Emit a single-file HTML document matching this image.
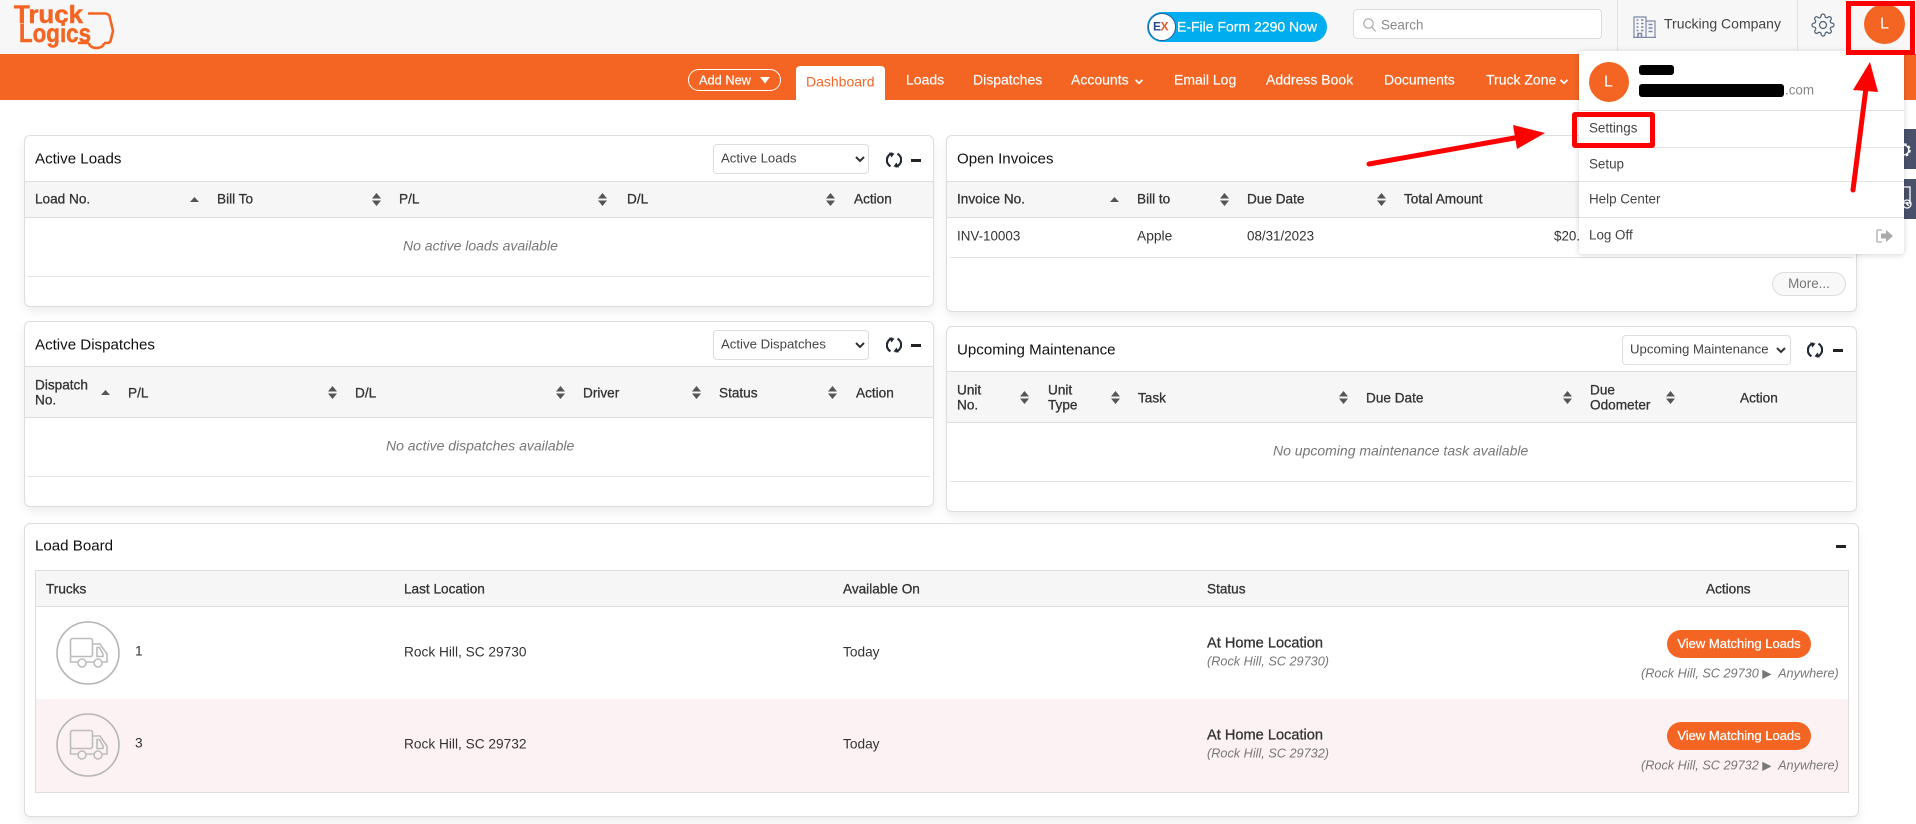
<!DOCTYPE html>
<html lang="en"><head><meta charset="utf-8"><title>Dashboard</title>
<style>
html,body{margin:0;padding:0;background:#fff}
body{position:relative;width:1916px;height:824px;overflow:hidden;font-family:"Liberation Sans",sans-serif;color:#333;font-size:13.4px}
.a{position:absolute;box-sizing:border-box}
.t{position:absolute;white-space:nowrap;transform:translateY(-50%);line-height:15px}
.h{-webkit-text-stroke:.3px #333;color:#333;font-size:13.6px}
.n{color:#fff;font-size:14px;-webkit-text-stroke:.15px #fff}
.ti{font-size:15.1px;color:#111}
.e{font-style:italic;color:#777;font-size:14px}
.b{font-size:13.7px;color:#333}
.s{font-size:13.2px;color:#444}
.m{font-style:italic;color:#777;font-size:12.7px}
.card{position:absolute;box-sizing:border-box;background:#fff;border:1px solid #ddd;border-radius:6px;box-shadow:0 5px 10px rgba(0,0,0,.07)}
.hd{position:absolute;background:#f6f6f6;border-top:1px solid #ddd;border-bottom:1px solid #ddd;box-sizing:border-box}
.ln{position:absolute;height:1px;background:#e2e2e2}
.sel{position:absolute;box-sizing:border-box;height:30px;border:1px solid #ddd;border-radius:4px;background:#fff}
.btn{position:absolute;width:144px;height:28px;left:1667px;border-radius:14px;background:#f46524;color:#fff;font-size:13px;line-height:28px;text-align:center;-webkit-text-stroke:.25px #fff}
svg{position:absolute;overflow:visible}
</style></head>
<body>
<svg width="0" height="0" style="position:absolute">
<symbol id="sb" viewBox="0 0 9 13"><path d="M4.500 0L9 5.500H0zM4.500 13L0 7.500H9z" fill="#555"/></symbol>
<symbol id="su" viewBox="0 0 9 5"><path d="M4.500 0L9 5H0z" fill="#555"/></symbol>
<symbol id="ch" viewBox="0 0 10 7"><path d="M1 1l4 4 4-4" fill="none" stroke="#333" stroke-width="2"/></symbol>
<symbol id="rf" viewBox="0 0 16 16"><path d="M6.500 1.300A7 7 0 0 0 4.500 14.300M9.500 14.700A7 7 0 0 0 11.500 1.700" fill="none" stroke="#1f2733" stroke-width="2.200"/><path d="M3 .5L8.500 1.500 5.500 5.500zM13 15.500L7.500 14.500 10.500 10.500z" fill="#1f2733"/></symbol>
<symbol id="tr" viewBox="0 0 64 64"><circle cx="32" cy="32" r="31" fill="none" stroke="#b5b5b5" stroke-width="1.600"/><g fill="none" stroke="#bcbcbc" stroke-width="1.600"><rect x="14.500" y="17.500" width="22" height="18" rx="2"/><path d="M36.500 23H44L51 33V41H46.500M37.500 41H30.500M21.500 41H14.500V35.500"/><path d="M41 26.500h2.500L47 33v2.500H41z"/><circle cx="26" cy="42" r="4"/><circle cx="42" cy="42" r="4"/></g></symbol>
</svg>

<!-- top bar -->
<div class="a" style="left:0;top:0;width:1916px;height:54px;background:#f7f7f7"></div>
<div class="a" style="left:0;top:54px;width:1916px;height:46px;background:#f46524"></div>

<svg style="left:0;top:0" width="120" height="54" viewBox="0 0 120 54">
<path d="M88 13.500H105Q108 13.500 109.500 16L113 31 110.500 41Q110 43 107 43H104M89 43H78" fill="none" stroke="#f46524" stroke-width="2.600"/>
<path d="M89 43a7.500 5 0 0 0 15 0" fill="none" stroke="#f46524" stroke-width="2.600"/>
<text x="14" y="23" font-family="Liberation Sans" font-size="25" font-weight="bold" fill="#f46524" stroke="#f46524" stroke-width=".5" textLength="69" lengthAdjust="spacingAndGlyphs">Truck</text>
<text x="19" y="42" font-family="Liberation Sans" font-size="26" font-weight="bold" fill="#f46524" stroke="#f46524" stroke-width=".5" textLength="72" lengthAdjust="spacingAndGlyphs">Logics</text>
</svg>

<div class="a" style="left:1147px;top:12px;width:180px;height:30px;border-radius:15px;background:#00aeef"></div>
<div class="a" style="left:1148px;top:13px;width:28px;height:28px;border-radius:50%;background:#fff;border:1px solid #2a5d96"></div>
<span class="t" style="left:1153px;top:27px;font-size:12px;font-weight:bold;color:#2a4c86;letter-spacing:-.5px">E<span style="color:#e8562a">X</span></span>
<span class="t" style="left:1177px;top:27px;color:#fff;font-size:14px;-webkit-text-stroke:.2px #fff">E-File Form 2290 Now</span>

<div class="a" style="left:1353px;top:9px;width:249px;height:30px;border:1px solid #ddd;border-radius:4px;background:#fff"></div>
<svg style="left:1363px;top:18px" width="13" height="14" viewBox="0 0 13 14"><circle cx="5.500" cy="5.500" r="4.700" fill="none" stroke="#aaa" stroke-width="1.200"/><path d="M9 9l3.500 4.500" stroke="#aaa" stroke-width="1.200"/></svg>
<span class="t" style="left:1381px;top:25px;color:#888;font-size:13.400px">Search</span>

<div class="a" style="left:1617px;top:0;width:1px;height:54px;background:#e0e0e0"></div>
<div class="a" style="left:1797px;top:0;width:1px;height:54px;background:#e0e0e0"></div>
<svg style="left:1633px;top:14px" width="23" height="24" viewBox="0 0 23 24" fill="none" stroke="#7a88a8" stroke-width="1.200"><path d="M1 23V3H13V23M13 7H22V23M0 23.400H23"/><path d="M3.500 6h2M8 6h2.500M3.500 9.500h2M8 9.500h2.500M3.500 13h2M8 13h2.500M3.500 16.500h2M8 16.500h2.500M15.500 10.500h4M15.500 14h4M15.500 17.500h4M5 23v-3.500h3.500V23" stroke-width="1.600"/></svg>
<span class="t" style="left:1664px;top:24px;font-size:14px;color:#444">Trucking Company</span>
<svg style="left:1811px;top:13px" width="24" height="24" viewBox="0 0 24 24" fill="none" stroke="#4d5d75" stroke-width="1.200"><circle cx="12" cy="12" r="3.500"/><path d="M19.400 15a1.650 1.650 0 0 0 .33 1.820l.06.06a2 2 0 0 1 0 2.830 2 2 0 0 1-2.830 0l-.06-.06a1.650 1.650 0 0 0-1.820-.33 1.650 1.650 0 0 0-1 1.510V21a2 2 0 0 1-2 2 2 2 0 0 1-2-2v-.09A1.650 1.650 0 0 0 9 19.400a1.650 1.650 0 0 0-1.820.33l-.06.06a2 2 0 0 1-2.830 0 2 2 0 0 1 0-2.830l.06-.06a1.650 1.650 0 0 0 .33-1.820 1.650 1.650 0 0 0-1.510-1H3a2 2 0 0 1-2-2 2 2 0 0 1 2-2h.09A1.650 1.650 0 0 0 4.600 9a1.650 1.650 0 0 0-.33-1.820l-.06-.06a2 2 0 0 1 0-2.830 2 2 0 0 1 2.830 0l.06.06a1.650 1.650 0 0 0 1.820.33H9a1.650 1.650 0 0 0 1-1.510V3a2 2 0 0 1 2-2 2 2 0 0 1 2 2v.09a1.650 1.650 0 0 0 1 1.510 1.650 1.650 0 0 0 1.820-.33l.06-.06a2 2 0 0 1 2.830 0 2 2 0 0 1 0 2.830l-.06.06a1.650 1.650 0 0 0-.33 1.820V9a1.650 1.650 0 0 0 1.510 1H21a2 2 0 0 1 2 2 2 2 0 0 1-2 2h-.09a1.650 1.650 0 0 0-1.510 1z"/></svg>
<div class="a" style="left:1864px;top:4px;width:41px;height:40px;border-radius:50%;background:#f46524"></div>
<span class="t" style="left:1880px;top:24px;color:#fff;font-size:16px">L</span>

<!-- nav -->
<div class="a" style="left:688px;top:69px;width:93px;height:22px;border:1px solid #fff;border-radius:11px"></div>
<span class="t" style="left:699px;top:80px;color:#fff;font-size:12.800px;-webkit-text-stroke:.2px #fff">Add New</span>
<svg style="left:760px;top:77px" width="10" height="7"><path d="M0 0H10L5 6.500z" fill="#fff"/></svg>
<div class="a" style="left:796px;top:66px;width:89px;height:34px;background:#fff;border-radius:4px 4px 0 0"></div>
<span class="t" style="left:806px;top:82px;color:#f46524;font-size:14px">Dashboard</span>
<span class="t n" style="left:906px;top:80px">Loads</span>
<span class="t n" style="left:973px;top:80px">Dispatches</span>
<span class="t n" style="left:1071px;top:80px">Accounts</span>
<svg style="left:1134px;top:79px" width="10" height="6" viewBox="0 0 10 7"><path d="M1 1l4 4 4-4" fill="none" stroke="#fff" stroke-width="2"/></svg>
<span class="t n" style="left:1174px;top:80px">Email Log</span>
<span class="t n" style="left:1266px;top:80px">Address Book</span>
<span class="t n" style="left:1384px;top:80px">Documents</span>
<span class="t n" style="left:1486px;top:80px">Truck Zone</span>
<svg style="left:1559px;top:79px" width="10" height="6" viewBox="0 0 10 7"><path d="M1 1l4 4 4-4" fill="none" stroke="#fff" stroke-width="2"/></svg>

<!-- Active Loads -->
<div class="card" style="left:24px;top:135px;width:910px;height:172px"></div>
<div class="hd" style="left:25px;top:181px;width:908px;height:37px"></div>
<div class="ln" style="left:28px;top:276px;width:902px"></div>
<span class="t ti" style="left:35px;top:159px">Active Loads</span>
<div class="sel" style="left:713px;top:144px;width:156px"></div>
<span class="t s" style="left:721px;top:158px">Active Loads</span>
<svg style="left:855px;top:156px" width="10" height="7"><use href="#ch"/></svg>
<svg style="left:886px;top:152px" width="16" height="16"><use href="#rf"/></svg>
<div class="a" style="left:911px;top:159px;width:10px;height:3px;background:#222"></div>
<span class="t h" style="left:35px;top:199px">Load No.</span>
<svg style="left:190px;top:197px" width="9" height="5"><use href="#su"/></svg>
<span class="t h" style="left:217px;top:199px">Bill To</span>
<svg style="left:372px;top:193px" width="9" height="13"><use href="#sb"/></svg>
<span class="t h" style="left:399px;top:199px">P/L</span>
<svg style="left:598px;top:193px" width="9" height="13"><use href="#sb"/></svg>
<span class="t h" style="left:627px;top:199px">D/L</span>
<svg style="left:826px;top:193px" width="9" height="13"><use href="#sb"/></svg>
<span class="t h" style="left:854px;top:199px">Action</span>
<span class="t e" style="left:403px;top:246px">No active loads available</span>

<!-- Active Dispatches -->
<div class="card" style="left:24px;top:321px;width:910px;height:186px"></div>
<div class="hd" style="left:25px;top:366px;width:908px;height:52px"></div>
<div class="ln" style="left:28px;top:476px;width:902px"></div>
<span class="t ti" style="left:35px;top:345px">Active Dispatches</span>
<div class="sel" style="left:713px;top:330px;width:156px"></div>
<span class="t s" style="left:721px;top:344px">Active Dispatches</span>
<svg style="left:855px;top:342px" width="10" height="7"><use href="#ch"/></svg>
<svg style="left:886px;top:337px" width="16" height="16"><use href="#rf"/></svg>
<div class="a" style="left:911px;top:344px;width:10px;height:3px;background:#222"></div>
<span class="t h" style="left:35px;top:385px">Dispatch</span>
<span class="t h" style="left:35px;top:400px">No.</span>
<svg style="left:101px;top:390px" width="9" height="5"><use href="#su"/></svg>
<span class="t h" style="left:128px;top:393px">P/L</span>
<svg style="left:328px;top:386px" width="9" height="13"><use href="#sb"/></svg>
<span class="t h" style="left:355px;top:393px">D/L</span>
<svg style="left:556px;top:386px" width="9" height="13"><use href="#sb"/></svg>
<span class="t h" style="left:583px;top:393px">Driver</span>
<svg style="left:692px;top:386px" width="9" height="13"><use href="#sb"/></svg>
<span class="t h" style="left:719px;top:393px">Status</span>
<svg style="left:828px;top:386px" width="9" height="13"><use href="#sb"/></svg>
<span class="t h" style="left:856px;top:393px">Action</span>
<span class="t e" style="left:386px;top:446px">No active dispatches available</span>

<!-- Open Invoices -->
<div class="card" style="left:946px;top:135px;width:911px;height:177px"></div>
<div class="hd" style="left:947px;top:181px;width:909px;height:37px"></div>
<div class="ln" style="left:950px;top:257px;width:903px"></div>
<span class="t ti" style="left:957px;top:159px">Open Invoices</span>
<span class="t h" style="left:957px;top:199px">Invoice No.</span>
<svg style="left:1110px;top:197px" width="9" height="5"><use href="#su"/></svg>
<span class="t h" style="left:1137px;top:199px">Bill to</span>
<svg style="left:1220px;top:193px" width="9" height="13"><use href="#sb"/></svg>
<span class="t h" style="left:1247px;top:199px">Due Date</span>
<svg style="left:1377px;top:193px" width="9" height="13"><use href="#sb"/></svg>
<span class="t h" style="left:1404px;top:199px">Total Amount</span>
<span class="t" style="left:957px;top:236px">INV-10003</span>
<span class="t" style="left:1137px;top:236px;font-size:13.800px">Apple</span>
<span class="t" style="left:1247px;top:236px">08/31/2023</span>
<span class="t" style="left:1554px;top:236px">$20.00</span>
<div class="a" style="left:1772px;top:272px;width:74px;height:24px;border:1px solid #ddd;border-radius:12px;background:#f8f8f8;text-align:center;line-height:22px;color:#777;font-size:13.400px">More...</div>

<!-- Upcoming Maintenance -->
<div class="card" style="left:946px;top:326px;width:911px;height:186px"></div>
<div class="hd" style="left:947px;top:371px;width:909px;height:52px"></div>
<div class="ln" style="left:950px;top:481px;width:903px"></div>
<span class="t ti" style="left:957px;top:350px">Upcoming Maintenance</span>
<div class="sel" style="left:1622px;top:335px;width:169px"></div>
<span class="t s" style="left:1630px;top:349px">Upcoming Maintenance</span>
<svg style="left:1776px;top:347px" width="10" height="7"><use href="#ch"/></svg>
<svg style="left:1807px;top:342px" width="16" height="16"><use href="#rf"/></svg>
<div class="a" style="left:1833px;top:349px;width:10px;height:3px;background:#222"></div>
<span class="t h" style="left:957px;top:390px">Unit</span>
<span class="t h" style="left:957px;top:405px">No.</span>
<svg style="left:1020px;top:391px" width="9" height="13"><use href="#sb"/></svg>
<span class="t h" style="left:1048px;top:390px">Unit</span>
<span class="t h" style="left:1048px;top:405px">Type</span>
<svg style="left:1111px;top:391px" width="9" height="13"><use href="#sb"/></svg>
<span class="t h" style="left:1138px;top:398px">Task</span>
<svg style="left:1339px;top:391px" width="9" height="13"><use href="#sb"/></svg>
<span class="t h" style="left:1366px;top:398px">Due Date</span>
<svg style="left:1563px;top:391px" width="9" height="13"><use href="#sb"/></svg>
<span class="t h" style="left:1590px;top:390px">Due</span>
<span class="t h" style="left:1590px;top:405px">Odometer</span>
<svg style="left:1666px;top:391px" width="9" height="13"><use href="#sb"/></svg>
<span class="t h" style="left:1740px;top:398px">Action</span>
<span class="t e" style="left:1273px;top:451px">No upcoming maintenance task available</span>

<!-- Load Board -->
<div class="card" style="left:24px;top:523px;width:1835px;height:294px"></div>
<span class="t ti" style="left:35px;top:546px">Load Board</span>
<div class="a" style="left:1836px;top:545px;width:10px;height:3px;background:#222"></div>
<div class="a" style="left:35px;top:570px;width:1814px;height:223px;border:1px solid #ddd;background:#fff"></div>
<div class="hd" style="left:36px;top:571px;width:1812px;height:36px;border-top:0"></div>
<div class="a" style="left:36px;top:699px;width:1812px;height:93px;background:#fdf2f3"></div>
<span class="t h" style="left:46px;top:589px">Trucks</span>
<span class="t h" style="left:404px;top:589px">Last Location</span>
<span class="t h" style="left:843px;top:589px">Available On</span>
<span class="t h" style="left:1207px;top:589px">Status</span>
<span class="t h" style="left:1706px;top:589px">Actions</span>

<svg style="left:56px;top:621px" width="64" height="64"><use href="#tr"/></svg>
<span class="t b" style="left:135px;top:651px">1</span>
<span class="t b" style="left:404px;top:652px">Rock Hill, SC 29730</span>
<span class="t b" style="left:843px;top:652px">Today</span>
<span class="t h" style="left:1207px;top:644px;font-size:14.600px">At Home Location</span>
<span class="t m" style="left:1207px;top:662px">(Rock Hill, SC 29730)</span>
<div class="btn" style="top:630px">View Matching Loads</div>
<span class="t m" style="left:1641px;top:674px">(Rock Hill, SC 29730 <span style="font-style:normal;font-family:'DejaVu Sans',sans-serif;font-size:12px">▶</span>&nbsp; Anywhere)</span>

<svg style="left:56px;top:713px" width="64" height="64"><use href="#tr"/></svg>
<span class="t b" style="left:135px;top:743px">3</span>
<span class="t b" style="left:404px;top:744px">Rock Hill, SC 29732</span>
<span class="t b" style="left:843px;top:744px">Today</span>
<span class="t h" style="left:1207px;top:736px;font-size:14.600px">At Home Location</span>
<span class="t m" style="left:1207px;top:754px">(Rock Hill, SC 29732)</span>
<div class="btn" style="top:722px">View Matching Loads</div>
<span class="t m" style="left:1641px;top:766px">(Rock Hill, SC 29732 <span style="font-style:normal;font-family:'DejaVu Sans',sans-serif;font-size:12px">▶</span>&nbsp; Anywhere)</span>

<!-- side tabs -->
<div class="a" style="left:1896px;top:129px;width:20px;height:40px;background:#49506a;border-radius:4px 0 0 4px"></div>
<div class="a" style="left:1896px;top:179px;width:20px;height:40px;background:#49506a;border-radius:4px 0 0 4px"></div>
<svg style="left:1897px;top:142px" width="14" height="16" viewBox="0 0 14 16"><circle cx="7" cy="8" r="5.500" fill="none" stroke="#fff" stroke-width="2.600" stroke-dasharray="2.500 1.800"/><circle cx="7" cy="8" r="4.800" fill="none" stroke="#fff" stroke-width="1.400"/></svg>
<svg style="left:1900px;top:186px" width="12" height="26" viewBox="0 0 12 26" fill="none" stroke="#fff" stroke-width="1.300"><rect x="2" y="1" width="8" height="16"/><circle cx="7" cy="18" r="4"/><path d="M7 16v2.500l2 1"/></svg>

<!-- dropdown -->
<div class="a" style="left:1579px;top:51px;width:325px;height:203px;background:#fff;border-radius:3px;box-shadow:0 1px 6px rgba(0,0,0,.18)"></div>
<div class="a" style="left:1589px;top:62px;width:40px;height:40px;border-radius:50%;background:#f46524"></div>
<span class="t" style="left:1604px;top:82px;color:#fff;font-size:16px">L</span>
<span class="t" style="left:1785px;top:90px;color:#888;font-size:13.400px">.com</span>
<div class="a" style="left:1639px;top:65px;width:35px;height:10px;background:#000;border-radius:3px"></div>
<div class="a" style="left:1639px;top:84px;width:145px;height:13px;background:#000;border-radius:3px"></div>
<div class="ln" style="left:1579px;top:110px;width:325px"></div>
<div class="ln" style="left:1579px;top:147px;width:325px"></div>
<div class="ln" style="left:1579px;top:181px;width:325px"></div>
<div class="ln" style="left:1579px;top:217px;width:325px"></div>
<span class="t" style="left:1589px;top:128px;color:#444">Settings</span>
<span class="t" style="left:1589px;top:164px;color:#444">Setup</span>
<span class="t" style="left:1589px;top:199px;color:#444">Help Center</span>
<span class="t" style="left:1589px;top:235px;color:#444">Log Off</span>
<svg style="left:1876px;top:229px" width="17" height="14" viewBox="0 0 17 14"><path d="M6 1H2Q1 1 1 2V12Q1 13 2 13H6" fill="none" stroke="#bbb" stroke-width="1.600"/><path d="M5 4.500H10V1L17 7 10 13V9.500H5z" fill="#aaa"/></svg>

<!-- annotations -->
<div class="a" style="left:1846px;top:1px;width:69px;height:54px;border:5px solid #f00"></div>
<div class="a" style="left:1572px;top:112px;width:83px;height:36px;border:5px solid #f00;border-radius:3px"></div>
<svg style="left:0;top:0" width="1916" height="824">
<path d="M1369 164L1520 137" stroke="#f00" stroke-width="5" stroke-linecap="round"/>
<path d="M1545 133L1513 125 1517 149z" fill="#f00"/>
<path d="M1853 190L1866 88" stroke="#f00" stroke-width="5" stroke-linecap="round"/>
<path d="M1870 62L1853 90 1878 92z" fill="#f00"/>
</svg>
</body></html>
